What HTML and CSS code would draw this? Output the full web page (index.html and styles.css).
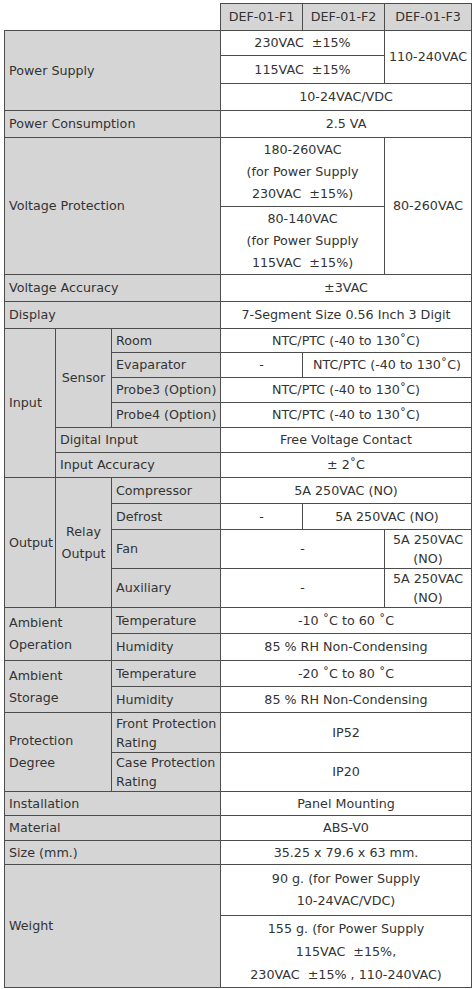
FILE: index.html
```html
<!DOCTYPE html>
<html>
<head>
<meta charset="utf-8">
<link rel="stylesheet" href="styles.css">
</head>
<body>
<table class="spec">
<colgroup><col class="c1"><col class="c2"><col class="c3"><col class="c4"><col class="c5"><col class="c6"></colgroup>
<tr class="r27"><td class="blank" colspan="3"></td><td class="hd">DEF-01-F1</td><td class="hd">DEF-01-F2</td><td class="hd">DEF-01-F3</td></tr>
<tr class="r25"><td class="lab" colspan="3" rowspan="3">Power Supply</td><td colspan="2">230VAC &nbsp;±15%</td><td rowspan="2">110-240VAC</td></tr>
<tr class="r28"><td colspan="2">115VAC &nbsp;±15%</td></tr>
<tr class="r27"><td colspan="3">10-24VAC/VDC</td></tr>
<tr class="r27"><td class="lab" colspan="3">Power Consumption</td><td colspan="3">2.5 VA</td></tr>
<tr class="r69"><td class="lab" colspan="3" rowspan="2">Voltage Protection</td><td colspan="2">180-260VAC<br>(for Power Supply<br>230VAC &nbsp;±15%)</td><td rowspan="2">80-260VAC</td></tr>
<tr class="r68"><td colspan="2">80-140VAC<br>(for Power Supply<br>115VAC &nbsp;±15%)</td></tr>
<tr class="r27"><td class="lab" colspan="3">Voltage Accuracy</td><td colspan="3">±3VAC</td></tr>
<tr class="r27"><td class="lab" colspan="3">Display</td><td colspan="3">7-Segment Size 0.56 Inch 3 Digit</td></tr>
<tr class="r24"><td class="lab" rowspan="6">Input</td><td class="lab ctr" rowspan="4">Sensor</td><td class="lab sub">Room</td><td colspan="3">NTC/PTC (-40 to 130˚C)</td></tr>
<tr class="r25"><td class="lab sub">Evaparator</td><td>-</td><td colspan="2">NTC/PTC (-40 to 130˚C)</td></tr>
<tr class="r25"><td class="lab sub">Probe3 (Option)</td><td colspan="3">NTC/PTC (-40 to 130˚C)</td></tr>
<tr class="r25"><td class="lab sub">Probe4 (Option)</td><td colspan="3">NTC/PTC (-40 to 130˚C)</td></tr>
<tr class="r25"><td class="lab sub" colspan="2">Digital Input</td><td colspan="3">Free Voltage Contact</td></tr>
<tr class="r25"><td class="lab sub" colspan="2">Input Accuracy</td><td colspan="3">± 2˚C</td></tr>
<tr class="r26"><td class="lab" rowspan="4">Output</td><td class="lab ctr" rowspan="4">Relay<br>Output</td><td class="lab sub">Compressor</td><td colspan="3">5A 250VAC (NO)</td></tr>
<tr class="r26"><td class="lab sub">Defrost</td><td>-</td><td colspan="2">5A 250VAC (NO)</td></tr>
<tr class="r39"><td class="lab sub">Fan</td><td colspan="2">-</td><td class="tight">5A 250VAC<br>(NO)</td></tr>
<tr class="r39"><td class="lab sub">Auxiliary</td><td colspan="2">-</td><td class="tight">5A 250VAC<br>(NO)</td></tr>
<tr class="r26"><td class="lab" colspan="2" rowspan="2">Ambient<br>Operation</td><td class="lab sub">Temperature</td><td colspan="3">-10 ˚C to 60 ˚C</td></tr>
<tr class="r27"><td class="lab sub">Humidity</td><td colspan="3">85 % RH Non-Condensing</td></tr>
<tr class="r26"><td class="lab" colspan="2" rowspan="2">Ambient<br>Storage</td><td class="lab sub">Temperature</td><td colspan="3">-20 ˚C to 80 ˚C</td></tr>
<tr class="r26"><td class="lab sub">Humidity</td><td colspan="3">85 % RH Non-Condensing</td></tr>
<tr class="r40"><td class="lab" colspan="2" rowspan="2">Protection<br>Degree</td><td class="lab sub tight">Front Protection<br>Rating</td><td colspan="3">IP52</td></tr>
<tr class="r39"><td class="lab sub tight">Case Protection<br>Rating</td><td colspan="3">IP20</td></tr>
<tr class="r24"><td class="lab" colspan="3">Installation</td><td colspan="3">Panel Mounting</td></tr>
<tr class="r25"><td class="lab" colspan="3">Material</td><td colspan="3">ABS-V0</td></tr>
<tr class="r24"><td class="lab" colspan="3">Size (mm.)</td><td colspan="3">35.25 x 79.6 x 63 mm.</td></tr>
<tr class="r51"><td class="lab" colspan="3" rowspan="2">Weight</td><td colspan="3">90 g. (for Power Supply<br>10-24VAC/VDC)</td></tr>
<tr class="r72"><td colspan="3" class="loose">155 g. (for Power Supply<br>115VAC &nbsp;±15%,<br>230VAC &nbsp;±15% , 110-240VAC)</td></tr>
</table>
</body>
</html>
```
FILE: styles.css
```css
body {
  margin: 0;
  background: #ffffff;
  font-family: "DejaVu Sans", sans-serif;
  font-size: 12.7px;
  color: #333333;
}

.spec {
  border-collapse: collapse;
  table-layout: fixed;
  width: 467px;
  margin: 3px 0 0 4px;
}

.c1 { width: 51px; }
.c2 { width: 56px; }
.c3 { width: 109px; }
.c4 { width: 82px; }
.c5 { width: 82px; }
.c6 { width: 87px; }

.spec td {
  border: 1px solid #4d4d4d;
  padding: 0 1px;
  line-height: 22px;
  text-align: center;
  vertical-align: middle;
  white-space: nowrap;
  overflow: hidden;
}

.spec td.blank {
  border: none;
  background: none;
}

.spec td.hd {
  background: #d5d5d5;
}

.spec td.lab {
  background: #d5d5d5;
  text-align: left;
  padding-left: 4px;
}

.spec td.sub {
  padding-left: 4px;
  padding-right: 0;
}

.spec td.ctr {
  text-align: center;
  padding-left: 1px;
}

.spec td.tight {
  line-height: 19px;
}

.spec td.loose {
  line-height: 23px;
}

.r24 { height: 24px; }
.r25 { height: 25px; }
.r26 { height: 26px; }
.r27 { height: 27px; }
.r28 { height: 28px; }
.r39 { height: 39px; }
.r40 { height: 40px; }
.r51 { height: 51px; }
.r68 { height: 68px; }
.r69 { height: 69px; }
.r72 { height: 72px; }
```
